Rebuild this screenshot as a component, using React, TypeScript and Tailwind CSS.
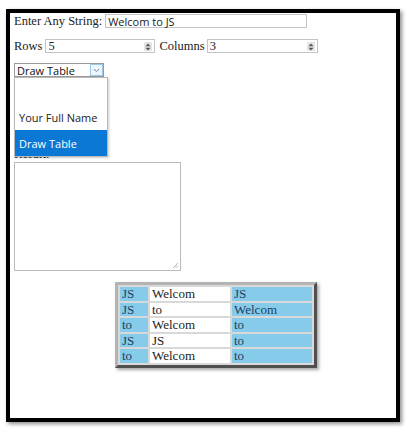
import React from 'react';

const rows: string[][] = [
  ['JS', 'Welcom', 'JS'],
  ['JS', 'to', 'Welcom'],
  ['to', 'Welcom', 'to'],
  ['JS', 'JS', 'to'],
  ['to', 'Welcom', 'to'],
];

function Spinner() {
  return (
    <span className="absolute right-[2px] top-[2px] flex h-[9px] w-[8px] items-center justify-center rounded-[1px] bg-[#e4e4e4]">
      <svg width="6" height="8" viewBox="0 0 6 8">
        <path d="M3 0.5 L5.5 3.2 H0.5 Z" fill="#555" />
        <path d="M3 7.5 L5.5 4.8 H0.5 Z" fill="#555" />
      </svg>
    </span>
  );
}

export default function App() {
  return (
    <div className="h-[432px] w-[412px] bg-white pt-[9px] pl-[6px] font-['Liberation_Serif',serif] text-[#222]">
      <div className="h-[413px] w-[394px] border-4 border-black pl-[4px] pt-[1px] shadow-[2px_2px_4px_rgba(0,0,0,0.45)]">
        {/* String input */}
        <div className="flex h-[14px] items-center gap-[3px] text-[12.5px] leading-none">
          <span>Enter Any String:</span>
          <div className="flex h-[14px] w-[202px] items-center border border-[#c4c4c4] pl-[2px] font-['Open_Sans',sans-serif] text-[11px]">
            Welcom to JS
          </div>
        </div>

        {/* Rows / Columns */}
        <div className="mt-[11px] flex h-[14px] items-center text-[12.5px] leading-none">
          <span>Rows</span>
          <div className="relative ml-[3px] flex h-[14px] w-[110px] items-center border border-[#c4c4c4] pl-[2px] text-[12.5px]">
            5
            <Spinner />
          </div>
          <span className="ml-[4px]">Columns</span>
          <div className="relative ml-[2px] flex h-[14px] w-[111px] items-center border border-[#c4c4c4] pl-[2px] text-[12.5px]">
            3
            <Spinner />
          </div>
        </div>

        {/* Select with open list */}
        <div className="relative mt-[10px]">
          <div className="flex h-[14px] w-[90px] items-center justify-between border border-[#9a9a9a] pl-[2px] font-['Open_Sans',sans-serif] text-[11px] leading-none text-[#111]">
            <span>Draw Table</span>
            <span className="flex h-[12px] w-[13px] items-center justify-center border border-[#9cc8ea] bg-[#eef6fc]">
              <svg width="7" height="5" viewBox="0 0 7 5">
                <path d="M1 1 L3.5 3.6 L6 1" stroke="#6b8aa6" strokeWidth="1" fill="none" />
              </svg>
            </span>
          </div>
          <div className="absolute left-0 top-[14px] z-10 w-[94px] border border-[#b9b9b9] bg-white font-['Open_Sans',sans-serif] text-[11px] leading-none shadow-[1px_1px_2px_rgba(0,0,0,0.2)]">
            <div className="h-[26px]" />
            <div className="flex h-[26px] items-center pl-[4px] text-[#222]">Your Full Name</div>
            <div className="flex h-[26px] items-center bg-[#0a78d4] pl-[4px] text-white">Draw Table</div>
          </div>
        </div>

        {/* Result */}
        <div className="mt-[69px] text-[12.5px] leading-[16px]">Result:</div>
        <div className="relative h-[109px] w-[167px] border border-[#bcbcbc]">
          <svg className="absolute bottom-[1px] right-[1px]" width="7" height="7" viewBox="0 0 7 7">
            <path d="M6 1 L1 6 M6 3.5 L3.5 6" stroke="#a0a0a0" strokeWidth="0.8" />
          </svg>
        </div>

        {/* Drawn table */}
        <table className="ml-[101px] mt-[11px] border-separate border-spacing-[2px] border-[3px] border-t-[#b4b4b4] border-l-[#b4b4b4] border-r-[#4f4f4f] border-b-[#4f4f4f] bg-[#d9d9d9] text-[13px] leading-none shadow-[2px_2px_3px_rgba(0,0,0,0.35)]">
          <tbody>
            {rows.map((r, i) => (
              <tr key={i}>
                <td className="h-[13.5px] w-[28px] bg-[#86cbe9] p-0 pl-[2px] text-[#1d3f63]">{r[0]}</td>
                <td className="h-[13.5px] w-[80px] bg-white p-0 pl-[2px] text-[#222]">{r[1]}</td>
                <td className="h-[13.5px] w-[80px] bg-[#86cbe9] p-0 pl-[2px] text-[#1d3f63]">{r[2]}</td>
              </tr>
            ))}
          </tbody>
        </table>
      </div>
    </div>
  );
}
